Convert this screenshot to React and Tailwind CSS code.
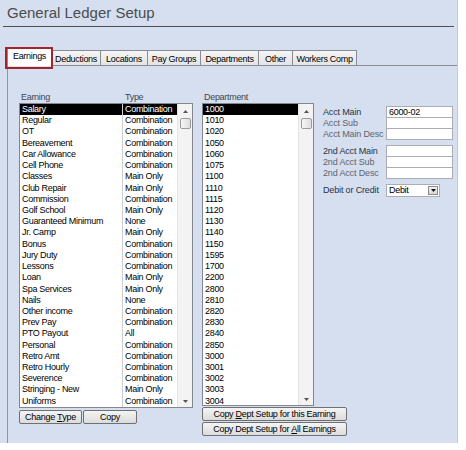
import React from "react";

const earnings = [
  ["Salary", "Combination"], ["Regular", "Combination"], ["OT", "Combination"], ["Bereavement", "Combination"],
  ["Car Allowance", "Combination"], ["Cell Phone", "Combination"], ["Classes", "Main Only"], ["Club Repair", "Main Only"],
  ["Commission", "Combination"], ["Golf School", "Main Only"], ["Guaranteed Minimum", "None"], ["Jr. Camp", "Main Only"],
  ["Bonus", "Combination"], ["Jury Duty", "Combination"], ["Lessons", "Combination"], ["Loan", "Main Only"],
  ["Spa Services", "Main Only"], ["Nails", "None"], ["Other income", "Combination"], ["Prev Pay", "Combination"],
  ["PTO Payout", "All"], ["Personal", "Combination"], ["Retro Amt", "Combination"], ["Retro Hourly", "Combination"],
  ["Severence", "Combination"], ["Stringing - New", "Main Only"], ["Uniforms", "Combination"],
];

const depts = ["1000", "1010", "1020", "1050", "1060", "1075", "1100", "1110", "1115", "1120", "1130", "1140", "1150", "1595", "1700", "2200", "2800", "2810", "2820", "2830", "2840", "2850", "3000", "3001", "3002", "3003", "3004"];

function ScrollBar() {
  return (
    <div className="w-[15px] shrink-0 h-full bg-[#f3f3f3] border-l border-[#e4e4e4] flex flex-col items-center">
      <div className="h-[14px] flex items-center justify-center">
        <svg width="5" height="3" viewBox="0 0 5 3"><path d="M0 3 L2.5 0 L5 3 Z" fill="#555" /></svg>
      </div>
      <div className="w-[11px] h-[11px] border border-[#9b9b9b] rounded-[2px] bg-gradient-to-r from-[#f6f6f6] to-[#dedede]"></div>
      <div className="flex-1"></div>
      <div className="h-[12px] flex items-center justify-center">
        <svg width="5" height="3" viewBox="0 0 5 3"><path d="M0 0 L2.5 3 L5 0 Z" fill="#555" /></svg>
      </div>
    </div>
  );
}

function Btn({ w, children }) {
  return (
    <div className={`${w} shrink-0 h-[14px] border border-[#707070] rounded-[2px] bg-gradient-to-b from-[#f4f4f4] to-[#dcdcdc] flex items-center justify-center text-[9px] leading-none text-black`}>
      {children}
    </div>
  );
}

const tabs = [
  ["Deductions", "w-[49px]"], ["Locations", "w-[47px]"], ["Pay Groups", "w-[53px]"],
  ["Departments", "w-[58px]"], ["Other", "w-[34px]"], ["Workers Comp", "w-[64px]"],
];

function Field({ label, dark, first }) {
  return (
    <div className={`flex items-center h-[12px] ${first ? "" : "-mt-px"}`}>
      <div className={`w-[63px] shrink-0 text-[9px] leading-none tracking-[-0.15px] whitespace-nowrap ${dark ? "text-[#2a3348]" : "text-[#5d6470]"}`}>{label}</div>
      <div className="w-[67px] h-[12px] bg-white border border-[#abadb3]"></div>
    </div>
  );
}

export default function App() {
  return (
    <div className="w-[466px] h-[450px] bg-white font-['Liberation_Sans',Arial,sans-serif] tracking-[-0.3px] overflow-hidden">
      <div className="relative w-[458px] h-[443px] bg-[#d5dfef] border-r border-[#c3cbd8] flex flex-col">
        {/* Title */}
        <div className="h-[27px] shrink-0 mx-[3px] border-b-[1.5px] border-[#4f4f4f] pl-[4px] pt-[4px] text-[15px] leading-[18px] text-[#4d4d4d] tracking-normal">
          General Ledger Setup
        </div>

        {/* Tabs */}
        <div className="mt-[20px] pl-[7px] flex items-end h-[19px] shrink-0">
          <div className="w-[45px] h-[19px] bg-white border border-b-0 border-[#898c95] flex justify-center pt-[3px] text-[9px] leading-[10px] text-black">
            Earnings
          </div>
          {tabs.map(([t, w]) => (
            <div key={t} className={`${w} h-[16px] bg-gradient-to-b from-[#f5f5f5] to-[#e4e4e4] border border-l-0 border-[#898c95] flex justify-center pt-[3px] text-[9px] leading-[10px] text-black`}>
              {t}
            </div>
          ))}
          <div className="flex-1 h-px bg-[#898c95]"></div>
        </div>

        {/* Red highlight annotation */}
        <div className="absolute left-[5px] top-[47px] w-[48px] h-[22px] border-2 border-[#a3252b]"></div>

        {/* Tab page */}
        <div className="ml-[7px] flex-1 border-l border-[#8c96a6] flex items-start pl-[11px] pt-[25px] text-[9px] text-black">
          {/* Earnings column */}
          <div className="flex flex-col w-[174px] shrink-0">
            <div className="h-[12px] flex text-[#404650] leading-[12px]">
              <div className="w-[105px] pl-[2px]">Earning</div>
              <div className="pl-[1px]">Type</div>
            </div>
            <div className="h-[305px] border border-[#828790] bg-white flex">
              <div className="flex-1 flex flex-col">
                {earnings.map(([n, t], i) => (
                  <div key={n} className={`h-[11.23px] flex leading-[11.23px] ${i === 0 ? "bg-black text-white" : ""}`}>
                    <div className="w-[103px] shrink-0 pl-[2px] border-r border-[#cfcfcf] whitespace-nowrap">{n}</div>
                    <div className="pl-[2px] whitespace-nowrap">{t}</div>
                  </div>
                ))}
              </div>
              <ScrollBar />
            </div>
            <div className="flex gap-[1px] mt-[2px]">
              <Btn w="w-[63px]">Change&nbsp;<u>T</u>ype</Btn>
              <Btn w="w-[54px]">Copy</Btn>
            </div>
          </div>

          {/* Department column */}
          <div className="flex flex-col w-[112px] shrink-0 ml-[9px]">
            <div className="h-[12px] pl-[2px] text-[#404650] leading-[12px]">Department</div>
            <div className="h-[303px] border border-[#828790] bg-white flex overflow-hidden">
              <div className="flex-1 flex flex-col">
                {depts.map((d, i) => (
                  <div key={d} className={`h-[11.23px] shrink-0 pl-[2px] leading-[11.23px] ${i === 0 ? "bg-black text-white" : ""}`}>{d}</div>
                ))}
              </div>
              <ScrollBar />
            </div>
            <div className="flex flex-col gap-[1px] mt-px">
              <Btn w="w-[145px]">Copy&nbsp;<u>D</u>ept Setup for this Earning</Btn>
              <Btn w="w-[145px]">Copy Dept Setup for&nbsp;<u>A</u>ll Earnings</Btn>
            </div>
          </div>

          {/* Form column */}
          <div className="ml-[9px] mt-[15px] flex flex-col">
            <div className="flex items-center h-[12px]">
              <div className="w-[63px] shrink-0 text-[9px] leading-none tracking-[-0.15px] text-[#2a3348]">Acct Main</div>
              <div className="w-[67px] h-[12px] bg-white border border-[#abadb3] pl-[2px] leading-[10px]">6000-02</div>
            </div>
            <Field label="Acct Sub" />
            <Field label="Acct Main Desc" />
            <div className="h-[5px]"></div>
            <Field label="2nd Acct Main" dark first />
            <Field label="2nd Acct Sub" />
            <Field label="2nd Acct Desc" />
            <div className="flex items-center h-[13px] mt-[5px]">
              <div className="w-[63px] shrink-0 text-[9px] leading-none tracking-[-0.15px] whitespace-nowrap text-[#2a3348]">Debit or Credit</div>
              <div className="w-[54px] h-[13px] bg-white border border-[#abadb3] flex items-center">
                <div className="flex-1 pl-[2px] leading-none">Debit</div>
                <div className="w-[10px] h-[9px] mr-[1px] border border-[#8a8a8a] bg-gradient-to-b from-[#f4f4f4] to-[#d8d8d8] flex items-center justify-center">
                  <svg width="5" height="3" viewBox="0 0 5 3"><path d="M0 0 L2.5 3 L5 0 Z" fill="#111" /></svg>
                </div>
              </div>
            </div>
          </div>
        </div>
      </div>
    </div>
  );
}
